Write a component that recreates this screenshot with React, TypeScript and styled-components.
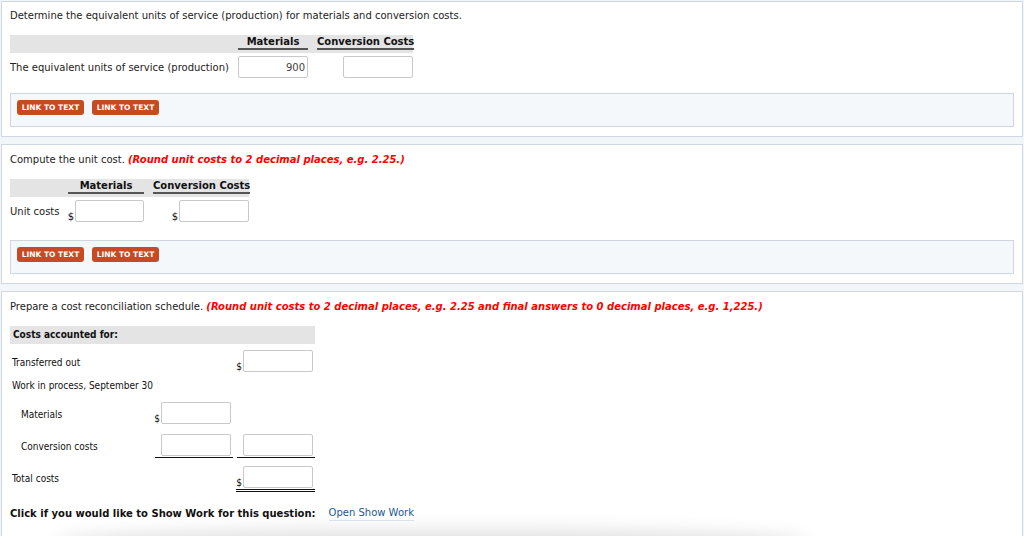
import styled, { createGlobalStyle } from 'styled-components'

const GlobalStyle = createGlobalStyle`
  html, body {
    margin: 0;
    padding: 0;
    background: #f3f6f9;
  }
  body {
    font-family: 'DejaVu Sans', Verdana, sans-serif;
    font-size: 10px;
    color: #111;
  }
`

const Page = styled.div`
  display: flex;
  flex-direction: column;
  gap: 7px;
  padding: 1px 1px 0 1px;
`

const Panel = styled.section<{ $top?: number; $bottom?: number }>`
  background: #fff;
  border: 1px solid #d0d7e0;
  padding: ${({ $top }) => $top ?? 7}px 8px ${({ $bottom }) => $bottom ?? 8}px 8px;
`

const Prompt = styled.p`
  margin: 0;
  line-height: 14px;
  color: #222;
`

const Note = styled.span`
  color: #f00;
  font-weight: bold;
  font-style: italic;
`

const HeadBand = styled.div<{ $width: number }>`
  display: flex;
  align-items: flex-start;
  width: ${({ $width }) => $width}px;
  height: 18px;
  background: #e4e4e4;
  margin-top: 12px;
`

const Spacer = styled.div<{ $width: number }>`
  flex: 0 0 ${({ $width }) => $width}px;
`

const ColHead = styled.div<{ $width: number; $gap?: number }>`
  flex: 0 0 ${({ $width }) => $width}px;
  margin-left: ${({ $gap }) => $gap ?? 0}px;
  height: 13px;
  line-height: 13px;
  text-align: center;
  font-weight: bold;
  color: #111;
  border-bottom: 2px solid #555;
  white-space: nowrap;
`

const Row = styled.div`
  display: flex;
  align-items: center;
  margin-top: 3px;
`

const RowLabel = styled.div<{ $width: number }>`
  flex: 0 0 ${({ $width }) => $width}px;
  white-space: nowrap;
  color: #222;
`

const Cell = styled.div<{ $width: number; $gap?: number }>`
  flex: 0 0 ${({ $width }) => $width}px;
  margin-left: ${({ $gap }) => $gap ?? 0}px;
  display: flex;
  justify-content: flex-end;
  align-items: flex-end;
`

const Dollar = styled.span`
  line-height: 10px;
  padding-right: 1px;
  color: #111;
`

const Field = styled.input<{ $width?: number }>`
  box-sizing: border-box;
  width: ${({ $width }) => $width ?? 70}px;
  height: 22px;
  border: 1px solid #c9c9c9;
  border-radius: 2px;
  background: #fff;
  font: inherit;
  color: #444;
  text-align: right;
  padding: 0 2px;
  margin: 0;
  outline: none;
`

const LinkBox = styled.div<{ $top: number }>`
  margin-top: ${({ $top }) => $top}px;
  border: 1px solid #cfd6df;
  background: #f4f8fb;
  display: flex;
  align-items: flex-start;
  gap: 8px;
  padding: 6px 0 0 6px;
  box-sizing: border-box;
  height: 34px;
`

const LinkButton = styled.button`
  width: 67px;
  height: 15px;
  padding: 0;
  border: none;
  border-radius: 3px;
  background: #c64b22;
  color: #fff;
  font-family: 'DejaVu Sans', Verdana, sans-serif;
  font-size: 7.5px;
  font-weight: bold;
  cursor: pointer;
`

const Schedule = styled.div`
  width: 305px;
  margin-top: 12px;
  font-family: 'DejaVu Sans Condensed', 'DejaVu Sans', Tahoma, sans-serif;
  font-size: 10px;
`

const ScheduleHead = styled.div`
  height: 18px;
  line-height: 18px;
  background: #e4e4e4;
  padding-left: 3px;
  margin-bottom: 3px;
  font-weight: bold;
`

const SRow = styled.div<{ $pad?: string }>`
  display: flex;
  align-items: center;
  padding: ${({ $pad }) => $pad ?? '3px 0 3px'};
`

const SLabel = styled.div<{ $indent?: boolean }>`
  flex: 1;
  padding-left: ${({ $indent }) => ($indent ? 11 : 2)}px;
  line-height: 14px;
  white-space: nowrap;
`

const SCell = styled.div<{ $line?: 'single' | 'double' }>`
  flex: 0 0 78px;
  margin-left: 4px;
  display: flex;
  justify-content: flex-end;
  align-items: flex-end;
  padding: 0 2px 1px 0;
  box-sizing: border-box;
  border-bottom: ${({ $line }) =>
    $line === 'double'
      ? '3px double #111'
      : $line === 'single'
        ? '1px solid #111'
        : '3px solid transparent'};
  margin-bottom: ${({ $line }) => ($line === 'single' ? 2 : 0)}px;
`

const ShowWork = styled.div`
  display: flex;
  gap: 13px;
  margin-top: 12px;
  line-height: 14px;
  padding-bottom: 20px;
`

const ShowWorkLabel = styled.span`
  font-weight: bold;
  color: #111;
`

const ShowWorkLink = styled.a`
  color: #1a5a96;
  text-decoration: none;
  border-bottom: 1px solid #dde6ef;
  line-height: 12px;
`

const BottomShade = styled.div`
  position: fixed;
  left: 60px;
  right: 220px;
  bottom: -30px;
  height: 30px;
  box-shadow: 0 -6px 18px rgba(0, 0, 0, 0.12);
  border-radius: 40%;
  pointer-events: none;
`

function Links({ top }: { top: number }) {
  return (
    <LinkBox $top={top}>
      <LinkButton>LINK TO TEXT</LinkButton>
      <LinkButton>LINK TO TEXT</LinkButton>
    </LinkBox>
  )
}

export default function App() {
  return (
    <>
      <GlobalStyle />
      <Page>
        <Panel $bottom={9}>
          <Prompt>
            Determine the equivalent units of service (production) for materials and conversion costs.
          </Prompt>
          <HeadBand $width={403}>
            <Spacer $width={228} />
            <ColHead $width={70}>Materials</ColHead>
            <ColHead $width={96} $gap={9}>Conversion Costs</ColHead>
          </HeadBand>
          <Row>
            <RowLabel $width={228}>The equivalent units of service (production)</RowLabel>
            <Cell $width={70}>
              <Field defaultValue="900" />
            </Cell>
            <Cell $width={96} $gap={9}>
              <Field />
            </Cell>
          </Row>
          <Links top={15} />
        </Panel>

        <Panel $top={8} $bottom={9}>
          <Prompt>
            Compute the unit cost. <Note>(Round unit costs to 2 decimal places, e.g. 2.25.)</Note>
          </Prompt>
          <HeadBand $width={239}>
            <Spacer $width={58} />
            <ColHead $width={76}>Materials</ColHead>
            <ColHead $width={96} $gap={9}>Conversion Costs</ColHead>
          </HeadBand>
          <Row>
            <RowLabel $width={56}>Unit costs</RowLabel>
            <Cell $width={78}>
              <Dollar>$</Dollar>
              <Field $width={69} />
            </Cell>
            <Cell $width={96} $gap={9}>
              <Dollar>$</Dollar>
              <Field />
            </Cell>
          </Row>
          <Links top={18} />
        </Panel>

        <Panel $top={8}>
          <Prompt>
            Prepare a cost reconciliation schedule.{' '}
            <Note>
              (Round unit costs to 2 decimal places, e.g. 2.25 and final answers to 0 decimal places, e.g. 1,225.)
            </Note>
          </Prompt>
          <Schedule>
            <ScheduleHead>Costs accounted for:</ScheduleHead>
            <SRow>
              <SLabel>Transferred out</SLabel>
              <SCell />
              <SCell>
                <Dollar>$</Dollar>
                <Field />
              </SCell>
            </SRow>
            <SRow $pad="0 0 6px">
              <SLabel>Work in process, September 30</SLabel>
            </SRow>
            <SRow>
              <SLabel $indent>Materials</SLabel>
              <SCell>
                <Dollar>$</Dollar>
                <Field />
              </SCell>
              <SCell />
            </SRow>
            <SRow>
              <SLabel $indent>Conversion costs</SLabel>
              <SCell $line="single">
                <Field />
              </SCell>
              <SCell $line="single">
                <Field />
              </SCell>
            </SRow>
            <SRow>
              <SLabel>Total costs</SLabel>
              <SCell />
              <SCell $line="double">
                <Dollar>$</Dollar>
                <Field />
              </SCell>
            </SRow>
          </Schedule>
          <ShowWork>
            <ShowWorkLabel>Click if you would like to Show Work for this question:</ShowWorkLabel>
            <ShowWorkLink href="#">Open Show Work</ShowWorkLink>
          </ShowWork>
        </Panel>
      </Page>
      <BottomShade />
    </>
  )
}
